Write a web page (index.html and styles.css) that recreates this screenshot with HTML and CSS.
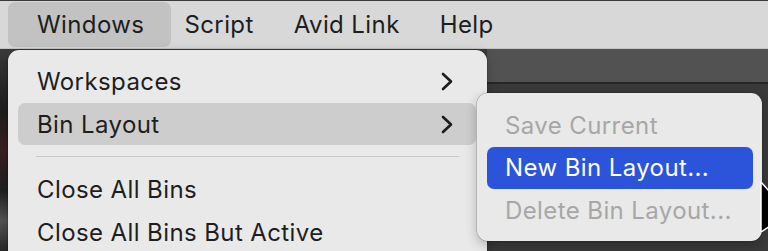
FILE: index.html
```html
<!DOCTYPE html>
<html>
<head>
<meta charset="utf-8">
<link rel="stylesheet" href="styles.css">
</head>
<body>
<div class="screen">
  <div class="menubar">
    <span class="mb-item active">Windows</span>
    <span class="mb-item">Script</span>
    <span class="mb-item">Avid Link</span>
    <span class="mb-item">Help</span>
  </div>
  <div class="backdrop">
    <div class="left-strip"></div>
    <div class="right-area">
      <div class="band"></div>
      <div class="band-line"></div>
    </div>
  </div>

  <div class="menu main-menu">
    <div class="row"><span>Workspaces</span>
      <svg class="chev" width="12" height="19" viewBox="0 0 12 19"><polyline points="2,2 10,9.5 2,17" fill="none" stroke="#1c1c1c" stroke-width="2.6" stroke-linecap="round" stroke-linejoin="round"/></svg>
    </div>
    <div class="row hover"><span>Bin Layout</span>
      <svg class="chev" width="12" height="19" viewBox="0 0 12 19"><polyline points="2,2 10,9.5 2,17" fill="none" stroke="#1c1c1c" stroke-width="2.6" stroke-linecap="round" stroke-linejoin="round"/></svg>
    </div>
    <div class="sep"></div>
    <div class="row"><span>Close All Bins</span></div>
    <div class="row"><span>Close All Bins But Active</span></div>
  </div>

  <div class="menu sub-menu">
    <div class="row disabled"><span>Save Current</span></div>
    <div class="row selected"><span>New Bin Layout...</span></div>
    <div class="row disabled"><span>Delete Bin Layout...</span></div>
  </div>

  <svg class="cursor" width="10" height="50" viewBox="0 0 10 50"><polygon points="1,0 10,10 10,44 1,50" fill="#000" stroke="#fff" stroke-width="1.5"/></svg>
</div>
</body>
</html>
```
FILE: styles.css
```css
html, body {
  margin: 0;
  padding: 0;
}
body {
  width: 768px;
  height: 251px;
  overflow: hidden;
  background: #2e2e2e;
  font-family: Inter, "Noto Sans", "Liberation Sans", sans-serif;
  letter-spacing: 0.4px;
}
.screen {
  position: relative;
  width: 768px;
  height: 251px;
  overflow: hidden;
}
.menubar {
  height: 47px;
  background: #d8d8d8;
  border-top: 1px solid #3a3a3a;
  border-bottom: 1px solid #c4c4c4;
  display: flex;
  align-items: center;
  padding-left: 8px;
  font-size: 24px;
  color: #1e1e1e;
  box-sizing: content-box;
}
.mb-item {
  margin-right: 40px;
  line-height: 45px;
}
.mb-item.active {
  background: #c2c2c2;
  border-radius: 7px;
  padding: 0 27px 0 29px;
  margin-right: 13px;
}
.backdrop {
  display: flex;
  height: 202px;
}
.left-strip {
  width: 8px;
  background: linear-gradient(#3a3a3a, #1e1e1e 30%, #3a2020 50%, #202020 70%, #555 85%, #2a2a2a);
}
.right-area {
  flex: 1;
  background: #3a3a3a;
}
.band {
  margin-left: 479px;
  height: 33px;
  background: #525252;
}
.band-line {
  margin-left: 479px;
  height: 2px;
  background: #262626;
}
.menu {
  position: absolute;
  background: #e9e9e9;
  border-radius: 11px;
  box-shadow: 0 0 0 0.5px rgba(0,0,0,0.25), 0 4px 12px rgba(0,0,0,0.25);
  font-size: 24px;
  color: #1e1e1e;
  box-sizing: border-box;
}
.main-menu {
  left: 8px;
  top: 50px;
  width: 479px;
  height: 230px;
  padding: 10px 11px 0 10px;
}
.row {
  height: 42px;
  display: flex;
  align-items: center;
  justify-content: space-between;
  padding: 0 23px 0 19px;
  border-radius: 7px;
}
.main-menu .row + .row {
  margin-top: 1px;
}
.row.hover {
  background: #cdcdcd;
}
.sep {
  height: 1px;
  background: #c9c9c9;
  margin: 11px 17px 11px 18px;
}
.sub-menu {
  left: 477px;
  top: 93px;
  width: 285px;
  height: 148px;
  padding: 11px 9px 0 10px;
}
.sub-menu .row {
  padding: 0 18px;
}
.sub-menu .row + .row {
  margin-top: 0.5px;
}
.row.disabled {
  color: #a7a7a7;
}
.row.selected {
  background: #2c54da;
  color: #ffffff;
}
.cursor {
  position: absolute;
  left: 760px;
  top: 182px;
}
```
